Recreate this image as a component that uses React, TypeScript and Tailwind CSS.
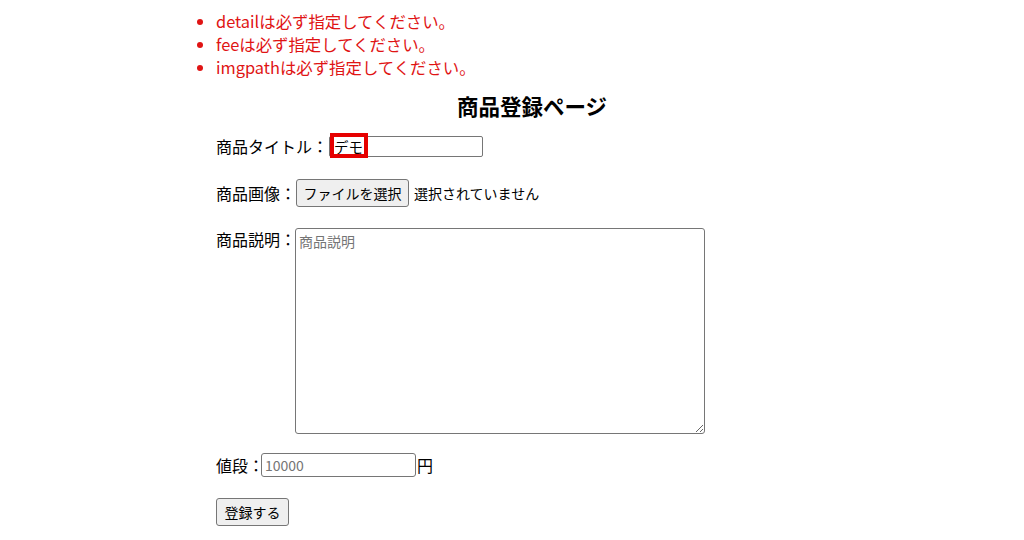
import React from 'react';

const ERRORS = ['detail', 'fee', 'imgpath'];

const App: React.FC = () => {
  return (
    <div className="min-h-[540px] w-[1024px] bg-white font-['Noto_Sans_CJK_JP','Noto_Sans',sans-serif] text-black">
      <div className="ml-[216px] w-[632px] pt-[10px]">
        {/* Validation errors */}
        <ul className="list-disc list-outside text-[16.4px] leading-[23px] text-[#e01414]">
          {ERRORS.map((name) => (
            <li key={name}>{name}は必ず指定してください。</li>
          ))}
        </ul>

        <h2 className="mt-[12px] text-center text-[21.5px] font-bold leading-[30px]">商品登録ページ</h2>

        <form className="text-[16px]" onSubmit={(e) => e.preventDefault()}>
          {/* Title */}
          <div className="mt-[13px] flex h-[25px] items-center">
            <label className="leading-[23px]">商品タイトル：</label>
            <div className="relative ml-[1px]">
              <input
                type="text"
                readOnly
                value="デモ"
                className="block h-[21px] w-[154px] rounded-[2px] border border-[#767676] pl-[4px] pr-[2px] text-[14.5px] leading-[19px] outline-none"
              />
              <div className="pointer-events-none absolute left-[1px] top-[-3px] h-[25px] w-[38px] border-[4px] border-[#e60000]" />
            </div>
          </div>

          {/* Image */}
          <div className="mt-[20px] flex h-[28px] items-center">
            <label className="leading-[23px]">商品画像：</label>
            <button
              type="button"
              className="h-[28px] w-[113px] rounded-[3px] border border-[#767676] bg-[#efefef] text-[14px] leading-none"
            >
              ファイルを選択
            </button>
            <span className="ml-[5px] text-[14px]">選択されていません</span>
          </div>

          {/* Description */}
          <div className="mt-[21px] flex items-start">
            <label className="leading-[23px]">商品説明：</label>
            <textarea
              placeholder="商品説明"
              className="-ml-[1px] h-[206px] w-[410px] rounded-[3px] border border-[#767676] px-[3px] py-[2px] text-[14px] leading-[20px] outline-none placeholder:text-[#757575]"
            />
          </div>

          {/* Price */}
          <div className="mt-[19px] flex h-[24px] items-center">
            <label className="leading-[23px]">値段：</label>
            <input
              type="text"
              placeholder="10000"
              className="-ml-[3px] h-[24px] w-[155px] rounded-[3px] border border-[#767676] px-[3px] text-[14px] outline-none placeholder:text-[#757575]"
            />
            <span className="ml-[1px] leading-[23px]">円</span>
          </div>

          {/* Submit */}
          <div className="mt-[21px]">
            <button
              type="submit"
              className="h-[28px] w-[73px] rounded-[3px] border border-[#767676] bg-[#efefef] text-[14px] leading-none"
            >
              登録する
            </button>
          </div>
        </form>
      </div>
    </div>
  );
};

export default App;
